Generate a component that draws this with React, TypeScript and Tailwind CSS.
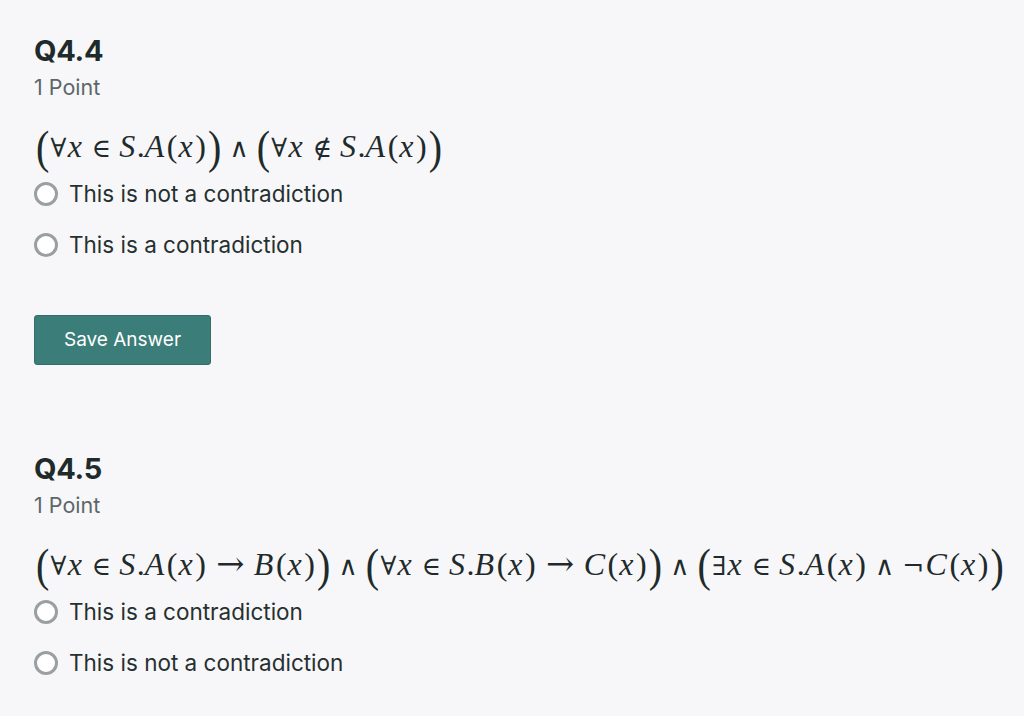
import React from "react";

const ui = { fontFamily: "Inter, Lato, sans-serif" };
const mathFont = { fontFamily: "'Liberation Serif', 'DejaVu Serif', serif" };

function V({ children }: { children: React.ReactNode }) {
  return <i className="tracking-[0.05em]" style={mathFont}>{children}</i>;
}
function Op({ children, cls = "mx-[0.31em]" }: { children: React.ReactNode; cls?: string }) {
  return <span className={cls} style={{ fontFamily: "'DejaVu Serif', serif", fontSize: "0.82em" }}>{children}</span>;
}
function Arrow() {
  return <span className="mx-[0.28em]" style={{ fontFamily: "'DejaVu Serif', serif", fontSize: "1.05em" }}>→</span>;
}
function P({ children }: { children: React.ReactNode }) {
  return <span className="mx-[0.03em]">{children}</span>;
}
function BigL() {
  return <span className="inline-block text-[1.25em] leading-none align-[-0.1em] scale-y-[1.15] mr-[0.03em]">(</span>;
}
function BigR() {
  return <span className="inline-block text-[1.25em] leading-none align-[-0.1em] scale-y-[1.15] ml-[0.03em]">)</span>;
}

function Radio({ label }: { label: string }) {
  return (
    <label className="flex items-center gap-[11px] h-[26px]">
      <span className="w-[24px] h-[24px] rounded-full border-[3.5px] border-[#9aa0a0] bg-white shrink-0" />
      <span className="text-[22.5px] text-[#26302f]" style={ui}>{label}</span>
    </label>
  );
}

function Header({ title }: { title: string }) {
  return (
    <div style={ui}>
      <div className="text-[29px] font-bold leading-[32px] text-[#1e2b2a] tracking-[-0.01em]">{title}</div>
      <div className="text-[21.5px] leading-[26px] text-[#5d6767] mt-[7px]">1 Point</div>
    </div>
  );
}

export default function App() {
  return (
    <div className="w-[1024px] h-[716px] bg-[#f7f7fa] overflow-hidden px-[34px] pt-[35px] text-[#1e2b2a]">
      <Header title="Q4.4" />
      <div className="mt-[22px] pl-[2px] text-[32px] leading-[48px] whitespace-nowrap text-[#1e2b2a]" style={mathFont}>
        <BigL />
        <Op cls="mr-[0.05em]">∀</Op><V>x</V><Op>∈</Op><V>S</V>.<V>A</V><P>(</P><V>x</V><P>)</P><BigR />
        <Op>∧</Op>
        <BigL />
        <Op cls="mr-[0.05em]">∀</Op><V>x</V><Op>∉</Op><V>S</V>.<V>A</V><P>(</P><V>x</V><P>)</P><BigR />
      </div>
      <div className="mt-[9px] flex flex-col gap-[25px]">
        <Radio label="This is not a contradiction" />
        <Radio label="This is a contradiction" />
      </div>
      <button
        className="mt-[57px] w-[177px] h-[50px] rounded-[3px] bg-[#3b7d78] text-white text-[19px] border border-[#336e69]"
        style={ui}
      >
        Save Answer
      </button>
      <div className="mt-[88px]">
        <Header title="Q4.5" />
      </div>
      <div className="mt-[22px] pl-[2px] text-[32px] leading-[48px] whitespace-nowrap text-[#1e2b2a]" style={mathFont}>
        <BigL />
        <Op cls="mr-[0.05em]">∀</Op><V>x</V><Op>∈</Op><V>S</V>.<V>A</V><P>(</P><V>x</V><P>)</P><Arrow /><V>B</V><P>(</P><V>x</V><P>)</P><BigR />
        <Op>∧</Op>
        <BigL />
        <Op cls="mr-[0.05em]">∀</Op><V>x</V><Op>∈</Op><V>S</V>.<V>B</V><P>(</P><V>x</V><P>)</P><Arrow /><V>C</V><P>(</P><V>x</V><P>)</P><BigR />
        <Op>∧</Op>
        <BigL />
        <Op cls="mr-[0.05em]">∃</Op><V>x</V><Op>∈</Op><V>S</V>.<V>A</V><P>(</P><V>x</V><P>)</P><Op>∧</Op><Op cls="mr-[0.05em]">¬</Op><V>C</V><P>(</P><V>x</V><P>)</P><BigR />
      </div>
      <div className="mt-[9px] flex flex-col gap-[25px]">
        <Radio label="This is a contradiction" />
        <Radio label="This is not a contradiction" />
      </div>
    </div>
  );
}
